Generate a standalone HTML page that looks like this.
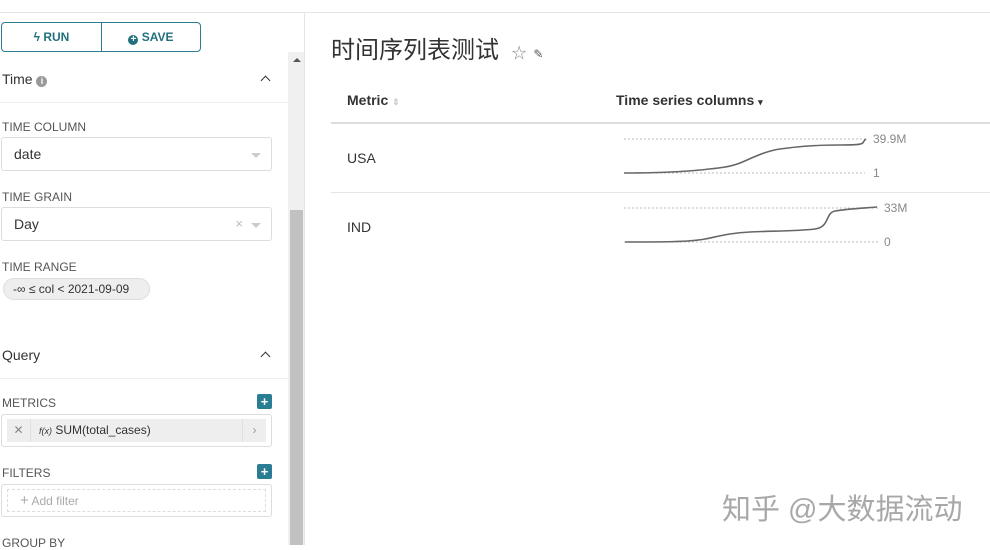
<!DOCTYPE html>
<html><head><meta charset="utf-8"><style>
*{box-sizing:border-box;margin:0;padding:0}
body{width:990px;height:545px;overflow:hidden;background:#fff;font-family:"Liberation Sans","Noto Sans CJK SC",sans-serif;position:relative;color:#333}
.a{position:absolute}
.lbl{font-size:12px;color:#555;left:2px}
.inp{left:1px;width:271px;border:1px solid #ddd;border-radius:3px;height:34px;font-size:14px;padding:8px 12px;color:#333}
.hd{font-size:14px;color:#333;left:2px}
.chev{left:262px;width:7px;height:7px;border-left:1.5px solid #333;border-top:1.5px solid #333;transform:rotate(45deg)}
.plus{width:15px;height:15px;background:#2a7d92;color:#fff;font-size:13px;line-height:15px;text-align:center;left:257px;border-radius:2px;font-weight:bold}
</style></head><body>
<div class="a" style="left:0;top:12px;width:990px;height:1px;background:#e5e5e5"></div>
<div class="a" style="left:304px;top:13px;width:1px;height:532px;background:#e5e5e5"></div>
<div class="a" style="left:288px;top:52px;width:16px;height:493px;background:#f0f0f0"></div>
<div class="a" style="left:290px;top:210px;width:13px;height:335px;background:#c1c1c1"></div>
<div class="a" style="left:293px;top:58px;width:0;height:0;border-left:4px solid transparent;border-right:4px solid transparent;border-bottom:4px solid #555"></div>

<div class="a" style="left:1px;top:22px;width:200px;height:30px;border:1px solid #2a7d92;border-radius:4px;display:flex;font-size:12px;color:#22707f;font-weight:bold">
<div style="width:100px;border-right:1px solid #2a7d92;text-align:center;line-height:28px">ϟ RUN</div>
<div style="flex:1;text-align:center;line-height:28px"><span style="display:inline-block;width:10px;height:10px;border-radius:50%;background:#22707f;color:#fff;font-size:10px;line-height:10px;vertical-align:-1px">+</span> SAVE</div>
</div>

<div class="a hd" style="top:71px">Time <span style="display:inline-block;width:11px;height:11px;border-radius:50%;background:#999;color:#fff;font-size:9px;line-height:11px;text-align:center;font-weight:bold">i</span></div>
<div class="a chev" style="top:77px"></div>
<div class="a" style="left:0;top:102px;width:288px;height:1px;background:#eee"></div>
<div class="a lbl" style="top:120px">TIME COLUMN</div>
<div class="a inp" style="top:137px">date<span style="position:absolute;right:10px;top:15px;border-left:5px solid transparent;border-right:5px solid transparent;border-top:5px solid #ccc"></span></div>
<div class="a lbl" style="top:190px">TIME GRAIN</div>
<div class="a inp" style="top:207px">Day<span style="position:absolute;right:28px;top:8px;color:#bbb;font-size:13px">×</span><span style="position:absolute;right:10px;top:15px;border-left:5px solid transparent;border-right:5px solid transparent;border-top:5px solid #ccc"></span></div>
<div class="a lbl" style="top:260px">TIME RANGE</div>
<div class="a" style="left:3px;top:278px;width:147px;height:22px;border-radius:11px;background:#eee;border:1px solid #ddd;font-size:12px;line-height:20px;padding-left:9px;color:#333">-∞ ≤ col &lt; 2021-09-09</div>

<div class="a hd" style="top:347px">Query</div>
<div class="a chev" style="top:353px"></div>
<div class="a" style="left:0;top:378px;width:288px;height:1px;background:#eee"></div>
<div class="a lbl" style="top:396px">METRICS</div>
<div class="a plus" style="top:394px">+</div>
<div class="a inp" style="top:414px;height:33px;padding:4px 5px">
<div style="background:#eee;height:23px;display:flex;font-size:12px;line-height:23px;color:#333">
<span style="width:24px;text-align:center;color:#888;border-right:1px solid #e0e0e0">✕</span>
<span style="padding-left:8px;flex:1"><i style="font-size:9px">f(x)</i> SUM(total_cases)</span>
<span style="width:24px;text-align:center;color:#999;border-left:1px solid #e0e0e0">›</span></div></div>
<div class="a lbl" style="top:466px">FILTERS</div>
<div class="a plus" style="top:464px">+</div>
<div class="a inp" style="top:484px;height:33px;padding:4px 5px"><div style="border:1px dashed #ddd;height:23px;font-size:12px;color:#aaa;line-height:21px;padding-left:12px"><span style="font-size:15px">+</span> Add filter</div></div>
<div class="a lbl" style="top:536px">GROUP BY</div>

<div class="a" style="left:331px;top:30px;font-size:24px;color:#333">时间序列表测试 <span style="font-size:15px;color:#888;margin-left:6px">☆</span> <span style="font-size:12px;color:#555">✎</span></div>
<div class="a" style="left:347px;top:92px;font-size:14px;font-weight:bold;color:#333">Metric <span style="color:#ccc;font-size:9px">⇕</span></div>
<div class="a" style="left:616px;top:92px;font-size:14px;font-weight:bold;color:#333">Time series columns <span style="font-size:9px">▾</span></div>
<div class="a" style="left:331px;top:122px;width:659px;height:2px;background:#ddd"></div>
<div class="a" style="left:331px;top:192px;width:659px;height:1px;background:#e5e5e5"></div>
<div class="a" style="left:347px;top:150px;font-size:14px">USA</div>
<div class="a" style="left:347px;top:219px;font-size:14px">IND</div>
<svg class="a" style="left:600px;top:125px" width="340" height="130">
<g stroke="#bbb" stroke-dasharray="2,2" stroke-width="1"><line x1="24" y1="14" x2="265" y2="14"/><line x1="24" y1="48" x2="265" y2="48"/><line x1="24" y1="83" x2="280" y2="83"/><line x1="24" y1="117" x2="280" y2="117"/></g>
<path d="M24 48 C50 48 80 47 100 45 S130 42 140 38 S165 26 180 24 S210 20 240 20 S260 18 266 14" fill="none" stroke="#666" stroke-width="1.6"/>
<path d="M25 117 C60 117 90 117 105 114 S130 108 150 107 S200 106 215 104 S225 88 235 86 S265 83 277 82" fill="none" stroke="#666" stroke-width="1.6"/>
<g font-size="12" fill="#888" font-family="Liberation Sans"><text x="273" y="18">39.9M</text><text x="273" y="52">1</text><text x="284" y="87">33M</text><text x="284" y="121">0</text></g>
</svg>
<div class="a" style="left:722px;top:486px;font-size:29px;color:#999;opacity:.85">知乎 @大数据流动</div>
</body></html>
